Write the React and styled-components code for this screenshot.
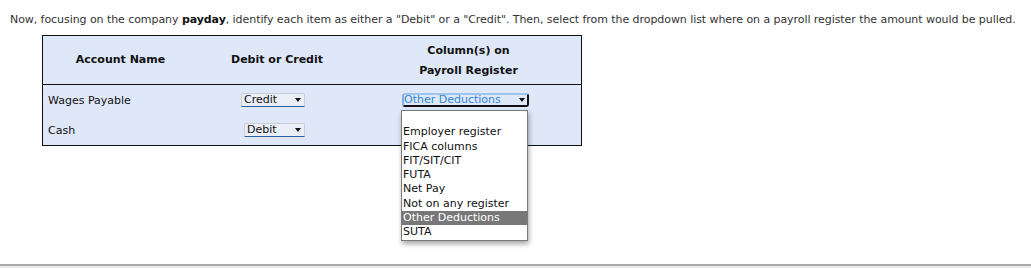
import React from "react";
import styled, { createGlobalStyle } from "styled-components";

const Global = createGlobalStyle`
  html, body { margin: 0; padding: 0; background: #fff; }
  body { font-family: "DejaVu Sans", Verdana, sans-serif; font-size: 11px; color: #222; }
`;

const Page = styled.div`
  height: 264px;
  padding: 13px 0 0 10px;
  box-sizing: border-box;
`;

const Instruction = styled.p`
  margin: 0;
  line-height: 14px;
  font-size: 11px;
  letter-spacing: -0.065px;
  color: #333;
  white-space: nowrap;
  b { color: #111; }
`;

const Table = styled.table`
  margin: 8px 0 0 32px;
  border: 1px solid #111;
  background: #dfe8f8;
  border-collapse: separate;
  border-spacing: 0;
  table-layout: fixed;
`;

const Th = styled.th`
  width: ${(p) => p.$w}px;
  height: 48px;
  padding: 0 ${(p) => (p.$gap ? 1 : 0)}px 0 0;
  font-weight: bold;
  font-size: 11px;
  line-height: 20px;
  color: #111;
  text-align: center;
  vertical-align: middle;
  border-bottom: 1px solid #111;
  background-clip: padding-box;
`;

const HeadInner = styled.div`
  padding-top: 1px;
`;

const Td = styled.td`
  height: 30px;
  padding: 0 0 0 ${(p) => p.$pl || 0}px;
  font-size: 11px;
  color: #111;
  text-align: left;
  vertical-align: middle;
  position: relative;
`;

const Select = styled.div`
  display: inline-flex;
  align-items: center;
  justify-content: space-between;
  box-sizing: border-box;
  width: ${(p) => p.$w}px;
  height: 14px;
  padding: 0 3px 0 2px;
  margin-left: ${(p) => p.$ml || 0}px;
  background: #e9eef7;
  border: 1px solid #c9cdd4;
  border-bottom: 1px solid #2b5f9e;
  border-radius: 2px 2px 0 0;
  font-size: 11px;
  line-height: 12px;
  color: #111;
  text-align: left;
  vertical-align: middle;
`;

const FocusSelect = styled(Select)`
  height: 14px;
  background: #dfe8f8;
  border: 2px solid #111;
  border-top-color: #9ec4ea;
  border-left-color: #7fb0e0;
  border-radius: 3px;
  color: #2f86d6;
  padding: 0 2px 0 0;
`;

const Arrow = styled.span`
  width: 0;
  height: 0;
  border-left: 3px solid transparent;
  border-right: 3px solid transparent;
  border-top: 4px solid #111;
`;

const List = styled.ul`
  position: absolute;
  left: 45px;
  top: 25px;
  z-index: 2;
  width: 127px;
  margin: 0;
  padding: 0;
  list-style: none;
  box-sizing: border-box;
  background: #fff;
  border: 1px solid #7a7a7a;
  box-shadow: 1px 3px 5px rgba(0, 0, 0, 0.35);
  text-align: left;
`;

const Option = styled.li`
  height: 14.3px;
  line-height: 14.3px;
  padding-left: 1px;
  font-size: 11px;
  white-space: nowrap;
  color: ${(p) => (p.$sel ? "#fff" : "#111")};
  background: ${(p) => (p.$sel ? "#787878" : "transparent")};
`;

const Footer = styled.div`
  height: 4px;
  border-top: 2px solid #aaa;
  background: #eee;
`;

const options = [
  "",
  "Employer register",
  "FICA columns",
  "FIT/SIT/CIT",
  "FUTA",
  "Net Pay",
  "Not on any register",
  "Other Deductions",
  "SUTA",
];

export default function App() {
  return (
    <>
      <Global />
      <Page>
        <Instruction>
          Now, focusing on the company <b>payday</b>, identify each item as either a "Debit" or a "Credit". Then, select from the dropdown list where on a payroll register the amount would be pulled.
        </Instruction>
        <Table>
          <thead>
            <tr>
              <Th $w={155} $gap>Account Name</Th>
              <Th $w={156} $gap>Debit or Credit</Th>
              <Th $w={225}>
                <HeadInner>
                  Column(s) on
                  <br />
                  Payroll Register
                </HeadInner>
              </Th>
            </tr>
          </thead>
          <tbody>
            <tr>
              <Td $pl={5}>Wages Payable</Td>
              <Td>
                <Select $w={64} $ml={42}>
                  Credit <Arrow />
                </Select>
              </Td>
              <Td>
                <FocusSelect $w={127} $ml={46}>
                  Other Deductions <Arrow />
                </FocusSelect>
                <List>
                  {options.map((o, i) => (
                    <Option key={i} $sel={o === "Other Deductions"}>
                      {o || "\u00a0"}
                    </Option>
                  ))}
                </List>
              </Td>
            </tr>
            <tr>
              <Td $pl={5}>Cash</Td>
              <Td>
                <Select $w={61} $ml={45}>
                  Debit <Arrow />
                </Select>
              </Td>
              <Td />
            </tr>
          </tbody>
        </Table>
      </Page>
      <Footer />
    </>
  );
}
